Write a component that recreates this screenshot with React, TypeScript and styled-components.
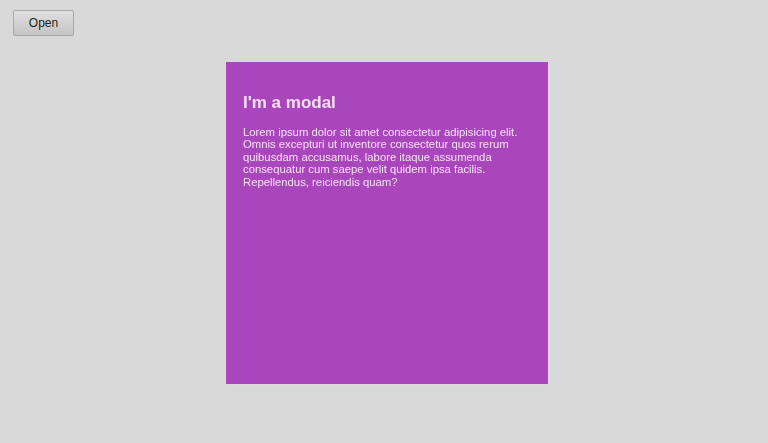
import styled, { createGlobalStyle } from 'styled-components';

const GlobalStyle = createGlobalStyle`
    html, body {
        margin: 0;
        padding: 0;
        background-color: #d9d9d9;
        font-family: "Liberation Sans", Arial, sans-serif;
    }
`

const Page = styled.main`
    min-height: 100vh;
    padding: 10px 13px;
    box-sizing: border-box;
`

const OpenButton = styled.button`
    width: 61px;
    height: 26px;
    font-family: "Liberation Sans", Arial, sans-serif;
    font-size: 12px;
    color: #222;
    border: 1px solid #a9a9a9;
    border-radius: 2px;
    background: linear-gradient(#e0e0e0, #c4c4c4);
    cursor: pointer;
`

const Overlay = styled.div`
    position: fixed;
    inset: 0;
    display: flex;
    align-items: center;
    justify-content: center;
    padding-left: 6px;
    padding-top: 2px;
`

const Modal = styled.section`
    width: 322px;
    height: 322px;
    box-sizing: border-box;
    padding: 31px 17px;
    background-color: #aa46bb;
    color: #f6e2f6;
    box-shadow: 0 0 2px rgba(255, 220, 255, 0.6);

    h2 {
        margin: 0 0 13px;
        font-size: 17px;
        font-weight: bold;
    }

    p {
        margin: 0;
        font-size: 11.3px;
        line-height: 12.6px;
    }
`

export default function App() {
    return <>
        <GlobalStyle />
        <Page>
            <OpenButton>Open</OpenButton>
            <Overlay>
                <Modal>
                    <h2>I'm a modal</h2>
                    <p>
                        Lorem ipsum dolor sit amet consectetur adipisicing elit.
                        Omnis excepturi ut inventore consectetur quos rerum
                        quibusdam accusamus, labore itaque assumenda
                        consequatur cum saepe velit quidem ipsa facilis.
                        Repellendus, reiciendis quam?
                    </p>
                </Modal>
            </Overlay>
        </Page>
    </>
}
